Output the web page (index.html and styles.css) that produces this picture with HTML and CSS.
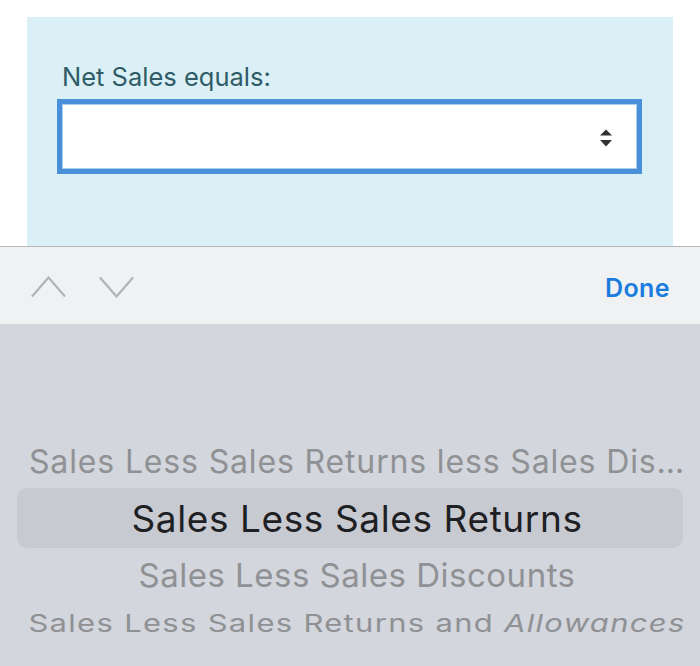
FILE: index.html
```html
<!DOCTYPE html>
<html lang="en">
<head>
  <meta charset="UTF-8" />
  <title>Net Sales</title>
  <link rel="stylesheet" href="styles.css">
</head>
<body>

  <!-- pregunta -->
  <div class="page">
    <div class="question">
      <label class="question-label" for="netSales">Net Sales equals:</label>
      <div class="select-box" id="netSales">
        <svg class="select-arrows" width="14" height="20" viewBox="0 0 14 20">
          <path d="M1 6.5 L7 0.5 L13 6.5 Z" fill="#333"/>
          <path d="M1 11 L7 17.5 L13 11 Z" fill="#333"/>
        </svg>
      </div>
    </div>
  </div>

  <!-- barra del teclado -->
  <div class="toolbar">
    <div class="nav-arrows">
      <svg width="36" height="22" viewBox="0 0 36 22">
        <path d="M1 20.5 L17.5 1.5 L34 20.5" fill="none" stroke="#b2b3b5" stroke-width="2.2"/>
      </svg>
      <svg width="36" height="22" viewBox="0 0 36 22">
        <path d="M1 1.5 L17.5 20.5 L34 1.5" fill="none" stroke="#b2b3b5" stroke-width="2.2"/>
      </svg>
    </div>
    <span class="done">Done</span>
  </div>

  <!-- rueda de opciones -->
  <div class="picker">
    <div class="option option-top">Sales Less Sales Returns less Sales Dis…</div>
    <div class="option option-selected"><span>Sales Less Sales Returns</span></div>
    <div class="option option-next">Sales Less Sales Discounts</div>
    <div class="option option-last"><span>Sales Less Sales Returns and <i>Allowances</i></span></div>
  </div>

</body>
</html>
```

FILE: styles.css
```css
/* === Reset === */
* { margin:0; padding:0; box-sizing:border-box; }
html, body {
  width:700px; height:666px;
  overflow:hidden;
  background:#fff;
  font-family: Inter, "Liberation Sans", Arial, sans-serif;
}

/* === Parte superior === */
.page {
  height:246px;
  padding:17px 27px 0;
}
.question {
  height:229px;
  background:#dbf0f6;
  padding:45px 31px 0 30px;
}
.question-label {
  display:block;
  font-size:25.5px;
  line-height:30px;
  color:#2f5c67;
  margin-left:5px;
  margin-bottom:7px;
}
.select-box {
  height:75px;
  background:#fff;
  border:5px solid #4a90d9;
  box-shadow: inset 0 0 0 1px #a9cdee;
  display:flex; align-items:center; justify-content:flex-end;
  padding-right:24px;
}
.select-arrows { margin-top:4px; }

/* === Toolbar === */
.toolbar {
  height:78px;
  background:#f0f1f3;
  border-top:1px solid #b6b8bb;
  display:flex; align-items:center; justify-content:space-between;
  padding:0 30px 0 31px;
}
.nav-arrows {
  display:flex; gap:32px;
  margin-top:2px;
}
.done {
  font-size:25px;
  font-weight:600;
  letter-spacing:0.4px;
  color:#1b7ce0;
  margin-top:4px;
}

/* === Picker === */
.picker {
  height:342px;
  background:#d3d6dc;
  padding-top:111px;
  display:flex; flex-direction:column;
}
.option {
  text-align:center;
  color:#8f9195;
  white-space:nowrap;
  padding-left:14px;
  display:flex; align-items:center; justify-content:center;
}
.option-top {
  height:53px;
  font-size:32px;
  letter-spacing:0.85px;
}
.option-selected {
  height:60px;
  margin:0 17px;
  background:#c7cad0;
  border-radius:10px;
  font-size:37px;
  letter-spacing:0.6px;
  color:#1f2023;
}
.option-next {
  height:54px;
  font-size:33px;
  letter-spacing:0.5px;
}
.option-last {
  height:42px;
  font-size:31px;
}
.option-last span {
  display:inline-block;
  transform:scaleY(0.78);
  letter-spacing:1.3px;
}
```
